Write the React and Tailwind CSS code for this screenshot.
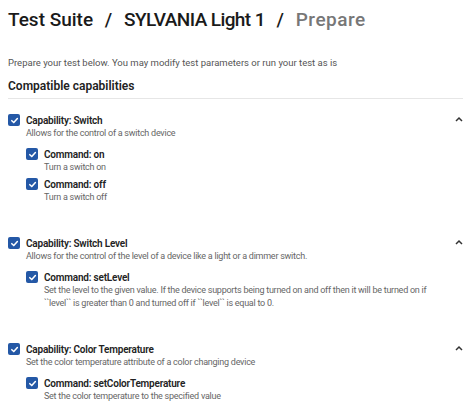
import React from "react";

function Check() {
  return (
    <span className="flex h-[12px] w-[12px] shrink-0 items-center justify-center rounded-[2px] bg-[#2458a6]">
      <svg width="9" height="9" viewBox="0 0 10 10">
        <path d="M2 5.2 L4.2 7.3 L8.2 2.8" fill="none" stroke="#fff" strokeWidth="1.7" strokeLinecap="round" strokeLinejoin="round" />
      </svg>
    </span>
  );
}

function Chevron() {
  return (
    <svg width="8" height="6" viewBox="0 0 8 6" className="mb-[2px]">
      <path d="M1 5 L4 2 L7 5" fill="none" stroke="#333" strokeWidth="1.5" />
    </svg>
  );
}

function Command({ title, desc }) {
  return (
    <div>
      <div className="flex h-[14px] items-center gap-[6px]">
        <Check />
        <span className="text-[10px] font-semibold tracking-[-0.2px] text-[#222]">{title}</span>
      </div>
      <div className="whitespace-nowrap pl-[18px] text-[9px] leading-[13px] tracking-[-0.25px] text-[#666]">{desc}</div>
    </div>
  );
}

function Capability({ title, desc, children }) {
  return (
    <div>
      <div className="flex h-[14px] items-center justify-between">
        <div className="flex items-center gap-[6px]">
          <Check />
          <span className="text-[10px] font-semibold tracking-[-0.2px] text-[#222]">{title}</span>
        </div>
        <Chevron />
      </div>
      <div className="pl-[18px] text-[9px] leading-[13px] tracking-[-0.25px] text-[#666]">{desc}</div>
      <div className="mt-[7px] flex flex-col gap-[3px] pl-[18px]">{children}</div>
    </div>
  );
}

export default function App() {
  return (
    <div
      className="h-[408px] w-[474px] overflow-hidden bg-white pl-[8px] pr-[11px]"
      style={{ fontFamily: "Roboto, sans-serif" }}
    >
      <h1 className="pt-[6px] text-[19px] font-medium leading-[28px] text-[#1a1a1a]">
        Test Suite <span className="mx-[7px]">/</span>{" "}
        <span className="tracking-[-0.6px]">SYLVANIA Light 1</span> <span className="mx-[7px]">/</span>{" "}
        <span className="tracking-[0.5px] text-[#777]">Prepare</span>
      </h1>
      <p className="mt-[22px] text-[9.5px] leading-[14px] text-[#555]">
        Prepare your test below. You may modify test parameters or run your test as is
      </p>
      <h2 className="mt-[7px] text-[12px] font-semibold leading-[18px] text-[#222]">Compatible capabilities</h2>
      <div className="mt-[3px] h-px bg-[#e6e6e6]" />
      <div className="mt-[14px] flex flex-col gap-[32px]">
        <Capability title="Capability: Switch" desc="Allows for the control of a switch device">
          <Command title="Command: on" desc="Turn a switch on" />
          <Command title="Command: off" desc="Turn a switch off" />
        </Capability>
        <Capability
          title="Capability: Switch Level"
          desc="Allows for the control of the level of a device like a light or a dimmer switch."
        >
          <Command
            title="Command: setLevel"
            desc={
              <>
                Set the level to the given value. If the device supports being turned on and off then it will be turned on if
                <br />
                ``level`` is greater than 0 and turned off if ``level`` is equal to 0.
              </>
            }
          />
        </Capability>
        <Capability
          title="Capability: Color Temperature"
          desc="Set the color temperature attribute of a color changing device"
        >
          <Command title="Command: setColorTemperature" desc="Set the color temperature to the specified value" />
        </Capability>
      </div>
    </div>
  );
}
